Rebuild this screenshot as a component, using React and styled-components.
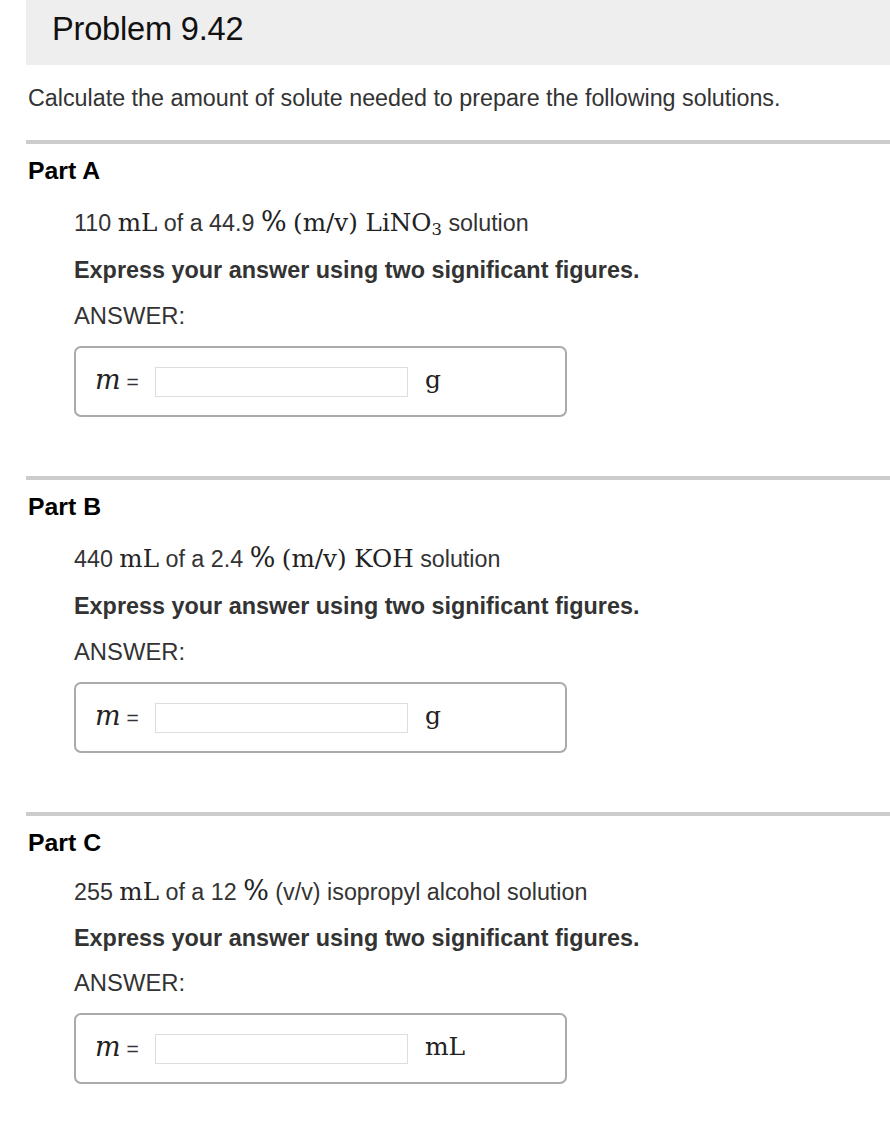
import React from "react";
import styled, { createGlobalStyle } from "styled-components";

const Global = createGlobalStyle`
  html, body { margin: 0; padding: 0; background: #fff; }
  body { font-family: "Liberation Sans", Arial, Helvetica, sans-serif; color: #333; }
`;

const Page = styled.div`
  padding-left: 26px;
  padding-bottom: 40px;
`;

const Header = styled.div`
  background: #eeeeee;
  height: 65px;
  display: flex;
  align-items: center;
  padding-left: 26px;
`;

const Title = styled.h1`
  margin: -8px 0 0;
  font-size: 32.6px;
  font-weight: normal;
  color: #111;
  line-height: 36px;
  letter-spacing: -0.2px;
`;

const Intro = styled.p`
  margin: 19px 0 28px 2px;
  font-size: 23.3px;
  line-height: 28px;
  color: #333;
  white-space: nowrap;
`;

const Part = styled.section`
  border-top: 4px solid #cccccc;
  padding-top: 13px;
  padding-bottom: 59px;
`;

const PartLabel = styled.h2`
  margin: 0 0 0 2px;
  font-size: 24.8px;
  line-height: 28px;
  font-weight: bold;
  color: #000;
`;

const Body = styled.div`
  padding-left: 48px;
  display: flex;
  flex-direction: column;
  align-items: flex-start;
`;

const Statement = styled.p`
  margin: ${(p) => (p.$compact ? "20px" : "23px")} 0 0;
  font-size: 23.3px;
  line-height: 28px;
  height: 28px;
  color: #333;
  white-space: nowrap;
`;

const M = styled.span`
  font-family: "DejaVu Serif", "Liberation Serif", serif;
  font-size: ${(p) => (p.$big ? "27px" : "24.6px")};
  color: #222;
`;

const Sub = styled.sub`
  font-size: 16.5px;
  vertical-align: -4px;
  line-height: 0;
`;

const Instruction = styled.p`
  margin: ${(p) => (p.$compact ? "19px" : "20px")} 0 0;
  font-size: 23.4px;
  line-height: 28px;
  font-weight: bold;
  color: #333;
  white-space: nowrap;
`;

const AnswerLabel = styled.p`
  margin: ${(p) => (p.$compact ? "17px" : "18px")} 0 0;
  font-size: 23.8px;
  line-height: 28px;
  color: #333;
`;

const AnswerBox = styled.div`
  margin-top: 16px;
  box-sizing: border-box;
  width: 493px;
  height: 71px;
  border: 2px solid #aaaaaa;
  border-radius: 7px;
  display: flex;
  align-items: center;
  padding-left: 19px;
`;

const Var = styled.span`
  font-family: "DejaVu Serif", "Liberation Serif", serif;
  font-style: italic;
  font-size: 27px;
  color: #222;
  margin-right: 6px;
  margin-top: -4px;
`;

const Eq = styled.span`
  font-size: 21px;
  color: #333;
  margin-right: 16px;
`;

const Input = styled.input`
  box-sizing: border-box;
  width: 253px;
  height: 30px;
  border: 1px solid #dddddd;
  background: #fff;
  outline: none;
  margin: 0;
  padding: 0 4px;
`;

const Unit = styled.span`
  font-family: "DejaVu Serif", "Liberation Serif", serif;
  font-size: 25px;
  color: #222;
  margin-left: 17px;
  margin-top: -4px;
`;

const parts = [
  {
    label: "Part A",
    statement: (
      <>
        110 <M>mL</M> of a 44.9 <M $big>%</M> <M>(m/v) LiNO<Sub>3</Sub></M> solution
      </>
    ),
    unit: "g",
  },
  {
    label: "Part B",
    statement: (
      <>
        440 <M>mL</M> of a 2.4 <M $big>%</M> <M>(m/v) KOH</M> solution
      </>
    ),
    unit: "g",
  },
  {
    label: "Part C",
    compact: true,
    statement: (
      <>
        255 <M>mL</M> of a 12 <M $big>%</M> (v/v) isopropyl alcohol solution
      </>
    ),
    unit: "mL",
  },
];

export default function App() {
  return (
    <>
      <Global />
      <Page>
        <Header>
          <Title>Problem 9.42</Title>
        </Header>
        <Intro>Calculate the amount of solute needed to prepare the following solutions.</Intro>
        {parts.map((p) => (
          <Part key={p.label}>
            <PartLabel>{p.label}</PartLabel>
            <Body>
              <Statement $compact={p.compact}>{p.statement}</Statement>
              <Instruction $compact={p.compact}>Express your answer using two significant figures.</Instruction>
              <AnswerLabel $compact={p.compact}>ANSWER:</AnswerLabel>
              <AnswerBox>
                <Var>m</Var>
                <Eq>=</Eq>
                <Input type="text" />
                <Unit>{p.unit}</Unit>
              </AnswerBox>
            </Body>
          </Part>
        ))}
      </Page>
    </>
  );
}
